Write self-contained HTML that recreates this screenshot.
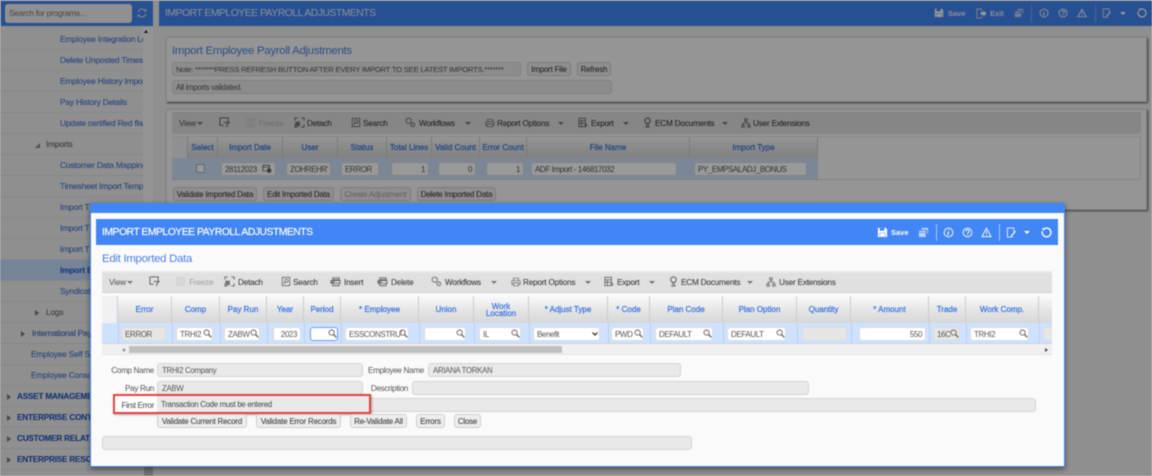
<!DOCTYPE html>
<html><head><meta charset="utf-8"><style>
html,body{margin:0;padding:0;width:1152px;height:476px;overflow:hidden;background:#eee}
body{position:relative;font-family:"Liberation Sans",sans-serif;font-size:8.2px;color:#444}
#root{position:absolute;left:0;top:0;width:1152px;height:476px;filter:blur(.45px)}
div,span.a{position:absolute;box-sizing:border-box;white-space:nowrap}
svg{position:absolute;overflow:visible}
.s{left:0;width:143px;height:21px;border-bottom:1px solid #e0e0e0;color:#4474d4;line-height:21.500px;font-size:8.4px;letter-spacing:-.2px;overflow:hidden;-webkit-text-stroke:.1px}
.b{font-weight:bold;color:#2456c0;font-size:8.2px;letter-spacing:-.2px}
.p{background:#f8f8f8;border:1px solid #ddd;box-shadow:1px 1px 2px #555}
.f{background:#e9e9e9;border:1px solid #d5d5d5;border-radius:3px;font-size:7.8px;letter-spacing:-.28px;color:#555;padding-left:4px;overflow:hidden}
.w{background:#fff;border:1px solid #dcdcdc;border-radius:3px;height:14px;top:327px;line-height:14px;font-size:8px;letter-spacing:-.4px;color:#555;padding-left:3px;overflow:hidden}
.g{background:#e6e6e6}
.r{text-align:right;padding-right:3px}
.btn{background:#ededed;border:1px solid #d0d0d0;border-radius:3px;text-align:center;font-size:7.9px;letter-spacing:-.17px;color:#444;height:14px;line-height:14px;-webkit-text-stroke:.1px}
.h{background:linear-gradient(#fafafa,#e4e4e4 55%,#d8d8d8);border-right:1px solid #ccc;text-align:center;color:#3d78e0;font-weight:normal;-webkit-text-stroke:.25px;font-size:8px;display:flex;align-items:center;justify-content:center;line-height:7.5px;white-space:normal;padding-top:1px}
.tb{font-size:8.2px;letter-spacing:-.2px;color:#444;line-height:11px;-webkit-text-stroke:.12px}
.l{font-size:8.2px;letter-spacing:-.35px;color:#555;text-align:right;line-height:12px}
.ar{width:0;height:0;border-left:3px solid transparent;border-right:3px solid transparent;border-top:3.5px solid #777}
.tt{font-size:10.4px;letter-spacing:-.5px;line-height:12px}
.st{color:#4a80e8;font-size:11.4px;letter-spacing:-.27px;line-height:14px}
</style></head><body>
<svg width="0" height="0" style="position:absolute"><defs>
<symbol id="q" viewBox="0 0 10 10"><circle cx="4" cy="4" r="2.9" fill="none" stroke="#666" stroke-width="1"/><path d="M6.2 6.2L9.3 9.3" stroke="#666" stroke-width="1.5"/></symbol>
<symbol id="flt" viewBox="0 0 12 12"><path d="M1 1h9v6M1 1v8h4M5 6h6L8.5 8.5V11" fill="none" stroke="#666" stroke-width="1.1"/></symbol>
<symbol id="frz" viewBox="0 0 12 12"><rect x="1" y="1" width="9" height="9" fill="#ddd" stroke="#ccc"/><path d="M4 1v9M7 1v9" stroke="#ccc"/></symbol>
<symbol id="det" viewBox="0 0 12 12"><path d="M1 4V1h3M8 1h3v3M11 8v3H8M4 11H1V8" fill="none" stroke="#666"/><rect x="1.5" y="5" width="5" height="5" fill="#777"/></symbol>
<symbol id="sea" viewBox="0 0 12 12"><rect x="1.5" y="1" width="9" height="10" fill="none" stroke="#666"/><circle cx="6.5" cy="5" r="2" fill="none" stroke="#666"/><path d="M5 6.5L3 9" stroke="#666"/></symbol>
<symbol id="ins" viewBox="0 0 12 12"><path d="M3 2h7v2H3zM1 5h10v3H1zM3 8h7v2.500H3z" fill="none" stroke="#666"/><path d="M1 6.500h4" stroke="#666" stroke-width="1.500"/></symbol>
<symbol id="wf" viewBox="0 0 12 12"><circle cx="4" cy="4" r="2.800" fill="none" stroke="#888" stroke-width="1.400"/><circle cx="8.500" cy="8.500" r="2" fill="none" stroke="#777" stroke-width="1.200"/></symbol>
<symbol id="pr" viewBox="0 0 12 12"><path d="M3 4V1.500h6V4M3 9H1V4.500h10V9H9M3 7h6v3.500H3z" fill="none" stroke="#777"/></symbol>
<symbol id="ex" viewBox="0 0 12 12"><path d="M1 1h8v10H1zM1 4h8M1 7h8M4 4v7" fill="none" stroke="#666"/><path d="M8 8h3v3H8z" fill="#777"/></symbol>
<symbol id="ecm" viewBox="0 0 12 12"><circle cx="6" cy="4" r="3" fill="none" stroke="#666" stroke-width="1.200"/><path d="M5 7h2v4H5zM3.500 11h5" fill="none" stroke="#666"/></symbol>
<symbol id="ue" viewBox="0 0 12 12"><path d="M4.500 1h3v2.500h-3zM1 8.500h3V11H1zM8 8.500h3V11H8zM6 3.500V6M2.500 8.500V6h7v2.500" fill="none" stroke="#666"/></symbol>
<symbol id="sv" viewBox="0 0 12 12"><path d="M1 1h8.500L11 2.500V11H1z" fill="#fff"/><path d="M3 1h5v3H3z" fill="#4285f4"/><path d="M3 6.500h6V11H3z" fill="#fff" stroke="#4285f4" stroke-width=".5"/></symbol>
<symbol id="ex2" viewBox="0 0 12 12"><path d="M6 3V1H1v10h5V9" fill="none" stroke="#ddd"/><path d="M5 4.500h3V2.500l3.500 3.500L8 9.500V7.500H5z" fill="#fff"/></symbol>
<symbol id="cp" viewBox="0 0 12 12"><path d="M4 1h7v6h-1V3H4z" fill="#bcd2f8"/><path d="M1 4h7.500v7H1z" fill="#bcd2f8"/><path d="M1 6h7.500" stroke="#4285f4" stroke-width=".7"/></symbol>
<symbol id="inf" viewBox="0 0 12 12"><circle cx="6" cy="6" r="4.800" fill="none" stroke="#fff" stroke-width="1"/><path d="M6.500 2.800v.9M6 5l-.6 4" stroke="#fff" stroke-width="1.300"/></symbol>
<symbol id="hlp" viewBox="0 0 12 12"><circle cx="6" cy="6" r="4.800" fill="none" stroke="#fff" stroke-width="1"/><path d="M4.300 4.700a1.800 1.700 0 1 1 2.600 1.500C6.200 6.600 6 7 6 7.500M6 8.300v1" fill="none" stroke="#fff"/></symbol>
<symbol id="wrn" viewBox="0 0 12 12"><path d="M6 1.500L11 10.500H1z" fill="none" stroke="#fff"/><path d="M6 4.500v3.500M6 8.600v1" stroke="#fff" stroke-width=".8"/></symbol>
<symbol id="nt" viewBox="0 0 12 12"><path d="M8.500 5V1H1.500v10h6" fill="none" stroke="#eee"/><path d="M5 9.500L10 4l.8 1L6 10.500z" fill="#fff"/></symbol>
<symbol id="rf" viewBox="0 0 12 12"><path d="M3.500 1.900A4.800 4.800 0 1 1 1.500 4.500" fill="none" stroke="#fff" stroke-width="1.500"/><path d="M1 1l3.500.6-1.800 2.700z" fill="#fff"/></symbol>
</defs></svg>
<div id="root">
<!-- sidebar -->
<div style="left:0;top:0;width:153px;height:476px;background:#eee"></div>
<div style="left:143px;top:27px;width:10px;height:449px;background:#f7f7f7"></div>
<div style="left:144px;top:30px;width:0;height:0;border-left:2.500px solid transparent;border-right:2.500px solid transparent;border-bottom:3px solid #222"></div>
<div style="left:144px;top:466px;width:9px;height:10px;background:#bbb"></div>
<div class="s" style="top:29px;padding-left:60px">Employee Integration Lo</div>
<div class="s" style="top:50px;padding-left:60px">Delete Unposted Timesl</div>
<div class="s" style="top:71px;padding-left:60px">Employee History Impor</div>
<div class="s" style="top:92px;padding-left:60px">Pay History Details</div>
<div class="s" style="top:113px;padding-left:60px">Update certified Red flag</div>
<div class="s" style="top:134px;padding-left:46px;color:#6a6a6a">Imports</div>
<div class="s" style="top:155px;padding-left:60px">Customer Data Mapping</div>
<div class="s" style="top:176px;padding-left:60px">Timesheet Import Templ</div>
<div class="s" style="top:197px;padding-left:60px">Import T</div>
<div class="s" style="top:218px;padding-left:60px">Import T</div>
<div class="s" style="top:239px;padding-left:60px">Import T</div>
<div class="s" style="top:260px;padding-left:60px;background:#c4dcff;font-weight:bold;color:#2e62c8">Import E</div>
<div class="s" style="top:281px;padding-left:60px">Syndicat</div>
<div class="s" style="top:302px;padding-left:46px;color:#6a6a6a">Logs</div>
<div class="s" style="top:323px;padding-left:32px;color:#3e63c0">International Pay</div>
<div class="s" style="top:344px;padding-left:31px">Employee Self S</div>
<div class="s" style="top:365px;padding-left:31px">Employee Conso</div>
<div class="s b" style="top:386px;padding-left:17px">ASSET MANAGEME</div>
<div class="s b" style="top:407px;padding-left:17px">ENTERPRISE CONT</div>
<div class="s b" style="top:428px;padding-left:17px">CUSTOMER RELAT</div>
<div class="s b" style="top:449px;padding-left:17px">ENTERPRISE RESO</div>
<div style="left:35px;top:143px;width:0;height:0;border-bottom:5px solid #888;border-left:5px solid transparent"></div>
<div style="left:35px;top:310px;border-left:4px solid #777;border-top:3.500px solid transparent;border-bottom:3.500px solid transparent"></div>
<div style="left:21px;top:331px;border-left:4px solid #777;border-top:3.500px solid transparent;border-bottom:3.500px solid transparent"></div>
<div style="left:7px;top:394px;border-left:4px solid #777;border-top:3.500px solid transparent;border-bottom:3.500px solid transparent"></div>
<div style="left:7px;top:415px;border-left:4px solid #777;border-top:3.500px solid transparent;border-bottom:3.500px solid transparent"></div>
<div style="left:7px;top:436px;border-left:4px solid #777;border-top:3.500px solid transparent;border-bottom:3.500px solid transparent"></div>
<div style="left:7px;top:457px;border-left:4px solid #777;border-top:3.500px solid transparent;border-bottom:3.500px solid transparent"></div>
<!-- top bars -->
<div style="left:0;top:0;width:1152px;height:1px;background:#f4f4f4"></div>
<div style="left:1px;top:1px;width:152px;height:25px;background:#4285f4"></div>
<div style="left:5px;top:4px;width:127px;height:19px;background:#f0f0f0;border-radius:3px;color:#777;font-size:8.400px;letter-spacing:-.3px;line-height:19px;padding-left:4px">Search for programs...</div>
<svg style="left:137px;top:8px" width="10" height="10" viewBox="0 0 12 12"><path d="M1.500 5A4.500 4.500 0 0 1 10 4M10.500 7A4.500 4.500 0 0 1 2 8" fill="none" stroke="#ddd" stroke-width="1.300"/><path d="M8 4h3.500V.8zM4 8H.5v3.200z" fill="#ddd"/></svg>
<div style="left:159px;top:1px;width:993px;height:25px;background:#4285f4"></div>
<div class="tt" style="left:165px;top:8px;color:#e8eefb">IMPORT EMPLOYEE PAYROLL ADJUSTMENTS</div>
<svg style="left:934px;top:8px" width="10" height="10"><use href="#sv"/></svg>
<div style="left:948px;top:9px;color:#eef;font-size:7.500px;font-weight:bold;line-height:10px">Save</div>
<svg style="left:976px;top:8px" width="11" height="11"><use href="#ex2"/></svg>
<div style="left:990px;top:9px;color:#eef;font-size:7.500px;font-weight:bold;line-height:10px">Exit</div>
<svg style="left:1014px;top:8px" width="10" height="10"><use href="#cp"/></svg>
<div style="left:1031px;top:5px;width:1px;height:17px;background:#7ea8f0"></div>
<svg style="left:1039px;top:8px" width="10" height="10"><use href="#inf"/></svg>
<svg style="left:1058px;top:8px" width="10" height="10"><use href="#hlp"/></svg>
<svg style="left:1077px;top:8px" width="10" height="10"><use href="#wrn"/></svg>
<div style="left:1095px;top:5px;width:1px;height:17px;background:#7ea8f0"></div>
<svg style="left:1102px;top:8px" width="10" height="10"><use href="#nt"/></svg>
<div class="ar" style="left:1120px;top:12px;border-top-color:#fff"></div>
<svg style="left:1137px;top:8px" width="10" height="10"><use href="#rf"/></svg>
<!-- panel 1 -->
<div class="p" style="left:166px;top:37px;width:981px;height:65px"></div>
<div class="st" style="left:172px;top:44px">Import Employee Payroll Adjustments</div>
<div class="f" style="left:172px;top:62px;width:349px;height:14px;line-height:14px;padding-left:3px;font-size:7.700px;letter-spacing:-.24px">Note: *******PRESS REFRESH BUTTON AFTER EVERY IMPORT TO SEE LATEST IMPORTS.*******</div>
<div class="btn" style="left:527px;top:62px;width:44px">Import File</div>
<div class="btn" style="left:577px;top:62px;width:34px">Refresh</div>
<div class="f" style="left:172px;top:80px;width:440px;height:14px;line-height:14px;padding-left:3px">All imports validated.</div>
<!-- panel 2 -->
<div class="p" style="left:166px;top:109px;width:981px;height:101px"></div>
<div style="left:172px;top:112px;width:969px;height:22px;background:#e0e0e0;border-top:1px solid #cdd5e2"></div>
<div style="left:172px;top:136px;width:969px;height:44px;border:1px solid #e2e2e2"></div>
<div class="tb" style="left:179px;top:118px;color:#666">View</div><div class="ar" style="left:197px;top:122px"></div>
<svg style="left:219px;top:117px" width="11" height="11"><use href="#flt"/></svg>
<svg style="left:246px;top:118px" width="10" height="10"><use href="#frz"/></svg>
<div class="tb" style="left:259px;top:118px;color:#bbb">Freeze</div>
<svg style="left:294px;top:117px" width="11" height="11"><use href="#det"/></svg>
<div class="tb" style="left:307px;top:118px">Detach</div>
<svg style="left:351px;top:117px" width="10" height="11"><use href="#sea"/></svg>
<div class="tb" style="left:363px;top:118px">Search</div>
<svg style="left:405px;top:117px" width="11" height="11"><use href="#wf"/></svg>
<div class="tb" style="left:419px;top:118px">Workflows</div><div class="ar" style="left:465px;top:122px"></div>
<svg style="left:485px;top:118px" width="10" height="10"><use href="#pr"/></svg>
<div class="tb" style="left:497px;top:118px">Report Options</div><div class="ar" style="left:558px;top:122px"></div>
<svg style="left:578px;top:117px" width="10" height="11"><use href="#ex"/></svg>
<div class="tb" style="left:591px;top:118px">Export</div><div class="ar" style="left:623px;top:122px"></div>
<svg style="left:642px;top:117px" width="11" height="11"><use href="#ecm"/></svg>
<div class="tb" style="left:655px;top:118px">ECM Documents</div><div class="ar" style="left:722px;top:122px"></div>
<svg style="left:741px;top:118px" width="10" height="10"><use href="#ue"/></svg>
<div class="tb" style="left:753px;top:118px">User Extensions</div>
<!-- table 1 -->
<div class="h" style="left:172px;top:137px;width:16px;height:21px;background:#f0f1f5"></div>
<div class="h" style="left:188px;top:137px;width:30px;height:21px">Select</div>
<div class="h" style="left:218px;top:137px;width:65px;height:21px">Import Date</div>
<div class="h" style="left:283px;top:137px;width:55px;height:21px">User</div>
<div class="h" style="left:338px;top:137px;width:49px;height:21px">Status</div>
<div class="h" style="left:387px;top:137px;width:45px;height:21px">Total Lines</div>
<div class="h" style="left:432px;top:137px;width:48px;height:21px">Valid Count</div>
<div class="h" style="left:480px;top:137px;width:47px;height:21px">Error Count</div>
<div class="h" style="left:527px;top:137px;width:163px;height:21px">File Name</div>
<div class="h" style="left:690px;top:137px;width:128px;height:21px">Import Type</div>
<div style="left:172px;top:158px;width:646px;height:22px;background:#cfe1fb;border-bottom:1px solid #c5d3e6"></div>
<div class="w" style="left:196px;top:164px;width:9px;height:9px;border:1px solid #aaa;border-radius:2px;padding:0"></div>
<div class="w" style="left:221px;top:162px;width:55px;height:14px">28112023</div>
<svg style="left:262px;top:163px" width="10" height="11" viewBox="0 0 12 12"><path d="M1 2h8v4M1 2v7h4M1 4.500h8" fill="none" stroke="#666"/><circle cx="8.500" cy="8.500" r="2.800" fill="#666"/></svg>
<div class="w" style="left:286px;top:162px;width:45px;height:14px">ZOHREHR'</div>
<div class="w" style="left:341px;top:162px;width:38px;height:14px">ERROR</div>
<div class="w r" style="left:391px;top:162px;width:38px;height:14px">1</div>
<div class="w r" style="left:438px;top:162px;width:38px;height:14px">0</div>
<div class="w r" style="left:486px;top:162px;width:38px;height:14px">1</div>
<div class="w" style="left:531px;top:162px;width:146px;height:14px">ADF Import - 146817032</div>
<div class="w" style="left:694px;top:162px;width:113px;height:14px">PY_EMPSALADJ_BONUS</div>
<div class="btn" style="left:173px;top:187px;width:84px">Validate Imported Data</div>
<div class="btn" style="left:263px;top:187px;width:71px">Edit Imported Data</div>
<div class="btn" style="left:340px;top:187px;width:71px;color:#aaa">Create Adjustment</div>
<div class="btn" style="left:417px;top:187px;width:79px">Delete Imported Data</div>
<!-- dim -->
<div style="left:0;top:0;width:1152px;height:476px;background:rgba(0,0,0,.4)"></div>
<!-- dialog -->
<div style="left:90px;top:203px;width:975px;height:264px;background:#fafafa;border:1px solid #4285f4;box-shadow:0 2px 5px rgba(0,0,0,.5)"></div>
<div style="left:90px;top:203px;width:975px;height:10px;background:#4285f4"></div>
<div style="left:96px;top:219px;width:962px;height:26px;background:#4285f4"></div>
<div class="tt" style="left:102px;top:227px;color:#fff;-webkit-text-stroke:.15px">IMPORT EMPLOYEE PAYROLL ADJUSTMENTS</div>
<svg style="left:877px;top:227px" width="11" height="11"><use href="#sv"/></svg>
<div style="left:891px;top:228px;color:#fff;font-size:7.500px;font-weight:bold;line-height:10px">Save</div>
<svg style="left:918px;top:227px" width="11" height="11"><use href="#cp"/></svg>
<div style="left:936px;top:224px;width:1px;height:17px;background:#a8c6fa"></div>
<svg style="left:943px;top:227px" width="11" height="11"><use href="#inf"/></svg>
<svg style="left:962px;top:227px" width="11" height="11"><use href="#hlp"/></svg>
<svg style="left:981px;top:227px" width="11" height="11"><use href="#wrn"/></svg>
<div style="left:999px;top:224px;width:1px;height:17px;background:#a8c6fa"></div>
<svg style="left:1006px;top:227px" width="11" height="11"><use href="#nt"/></svg>
<div class="ar" style="left:1024px;top:231px;border-top-color:#fff"></div>
<svg style="left:1041px;top:227px" width="11" height="11"><use href="#rf"/></svg>
<div class="st" style="left:102px;top:252px">Edit Imported Data</div>
<!-- toolbar -->
<div style="left:102px;top:271px;width:950px;height:22px;background:#e0e0e0;border-top:2px solid #e8e8e8;border-bottom:1px solid #d2d2d2"></div>
<div class="tb" style="left:109px;top:277px;color:#666">View</div><div class="ar" style="left:127px;top:281px"></div>
<svg style="left:149px;top:276px" width="11" height="11"><use href="#flt"/></svg>
<svg style="left:176px;top:277px" width="10" height="10"><use href="#frz"/></svg>
<div class="tb" style="left:189px;top:277px;color:#aaa">Freeze</div>
<svg style="left:224px;top:276px" width="11" height="11"><use href="#det"/></svg>
<div class="tb" style="left:238px;top:277px">Detach</div>
<svg style="left:281px;top:276px" width="10" height="11"><use href="#sea"/></svg>
<div class="tb" style="left:293px;top:277px">Search</div>
<svg style="left:330px;top:276px" width="11" height="11"><use href="#ins"/></svg>
<div class="tb" style="left:344px;top:277px">Insert</div>
<svg style="left:377px;top:276px" width="11" height="11"><use href="#ins"/></svg>
<div class="tb" style="left:391px;top:277px">Delete</div>
<svg style="left:431px;top:276px" width="11" height="11"><use href="#wf"/></svg>
<div class="tb" style="left:445px;top:277px">Workflows</div><div class="ar" style="left:491px;top:281px"></div>
<svg style="left:511px;top:277px" width="10" height="10"><use href="#pr"/></svg>
<div class="tb" style="left:523px;top:277px">Report Options</div><div class="ar" style="left:585px;top:281px"></div>
<svg style="left:604px;top:276px" width="10" height="11"><use href="#ex"/></svg>
<div class="tb" style="left:617px;top:277px">Export</div><div class="ar" style="left:649px;top:281px"></div>
<svg style="left:668px;top:276px" width="11" height="11"><use href="#ecm"/></svg>
<div class="tb" style="left:681px;top:277px">ECM Documents</div><div class="ar" style="left:747px;top:281px"></div>
<svg style="left:766px;top:277px" width="10" height="10"><use href="#ue"/></svg>
<div class="tb" style="left:779px;top:277px">User Extensions</div>
<!-- table header -->
<div class="h" style="left:102px;top:296px;width:16px;height:27px;background:#eff1f5"></div>
<div class="h" style="left:118px;top:296px;width:54px;height:27px">Error</div>
<div class="h" style="left:172px;top:296px;width:48px;height:27px">Comp</div>
<div class="h" style="left:220px;top:296px;width:47px;height:27px">Pay Run</div>
<div class="h" style="left:267px;top:296px;width:37px;height:27px">Year</div>
<div class="h" style="left:304px;top:296px;width:37px;height:27px">Period</div>
<div class="h" style="left:341px;top:296px;width:78px;height:27px">* Employee</div>
<div class="h" style="left:419px;top:296px;width:55px;height:27px">Union</div>
<div class="h" style="left:474px;top:296px;width:55px;height:27px">Work<br>Location</div>
<div class="h" style="left:529px;top:296px;width:79px;height:27px">* Adjust Type</div>
<div class="h" style="left:608px;top:296px;width:42px;height:27px">* Code</div>
<div class="h" style="left:650px;top:296px;width:73px;height:27px">Plan Code</div>
<div class="h" style="left:723px;top:296px;width:74px;height:27px">Plan Option</div>
<div class="h" style="left:797px;top:296px;width:54px;height:27px">Quantity</div>
<div class="h" style="left:851px;top:296px;width:78px;height:27px">* Amount</div>
<div class="h" style="left:929px;top:296px;width:37px;height:27px">Trade</div>
<div class="h" style="left:966px;top:296px;width:73px;height:27px">Work Comp.</div>
<div class="h" style="left:1039px;top:296px;width:13px;height:27px;border-right:0"></div>
<!-- row -->
<div style="left:102px;top:323px;width:950px;height:21px;background:#cfe2fd;border-bottom:1px solid #c8d4e4"></div>
<div style="left:118px;top:323px;width:1px;height:21px;background:#bcd0ea"></div>
<div style="left:172px;top:323px;width:1px;height:21px;background:#bcd0ea"></div>
<div style="left:220px;top:323px;width:1px;height:21px;background:#bcd0ea"></div>
<div style="left:267px;top:323px;width:1px;height:21px;background:#bcd0ea"></div>
<div style="left:304px;top:323px;width:1px;height:21px;background:#bcd0ea"></div>
<div style="left:341px;top:323px;width:1px;height:21px;background:#bcd0ea"></div>
<div style="left:419px;top:323px;width:1px;height:21px;background:#bcd0ea"></div>
<div style="left:474px;top:323px;width:1px;height:21px;background:#bcd0ea"></div>
<div style="left:529px;top:323px;width:1px;height:21px;background:#bcd0ea"></div>
<div style="left:608px;top:323px;width:1px;height:21px;background:#bcd0ea"></div>
<div style="left:650px;top:323px;width:1px;height:21px;background:#bcd0ea"></div>
<div style="left:723px;top:323px;width:1px;height:21px;background:#bcd0ea"></div>
<div style="left:797px;top:323px;width:1px;height:21px;background:#bcd0ea"></div>
<div style="left:851px;top:323px;width:1px;height:21px;background:#bcd0ea"></div>
<div style="left:929px;top:323px;width:1px;height:21px;background:#bcd0ea"></div>
<div style="left:966px;top:323px;width:1px;height:21px;background:#bcd0ea"></div>
<div style="left:1039px;top:323px;width:1px;height:21px;background:#bcd0ea"></div>
<div class="w g" style="left:121px;width:45px">ERROR</div>
<div class="w" style="left:176px;width:37px">TRHI2</div>
<div class="w" style="left:224px;width:36px">ZABW</div>
<div class="w r" style="left:273px;width:28px">2023</div>
<div class="w" style="left:310px;width:28px;border:1px solid #6f9ff0"></div>
<div class="w" style="left:345px;width:64px">ESSCONSTRU'</div>
<div class="w" style="left:424px;width:42px"></div>
<div class="w" style="left:479px;width:42px">IL</div>
<div class="w" style="left:533px;width:67px">Benefit</div>
<svg style="left:592px;top:332px" width="6" height="4" viewBox="0 0 6 4"><path d="M.5.5L3 3 5.500.5" fill="none" stroke="#222" stroke-width="1.200"/></svg>
<div class="w" style="left:611px;width:33px">PWD</div>
<div class="w" style="left:655px;width:58px">DEFAULT</div>
<div class="w" style="left:727px;width:59px">DEFAULT</div>
<div class="w g" style="left:802px;width:45px"></div>
<div class="w r" style="left:859px;width:67px">550</div>
<div class="w g" style="left:933px;width:27px">16C</div>
<div class="w" style="left:970px;width:59px">TRHI2</div>
<div class="w g" style="left:1043px;width:9px;border-right:0"></div>
<svg style="left:203px;top:329px" width="9" height="9"><use href="#q"/></svg>
<svg style="left:250px;top:329px" width="9" height="9"><use href="#q"/></svg>
<svg style="left:328px;top:329px" width="9" height="9"><use href="#q"/></svg>
<svg style="left:399px;top:329px" width="9" height="9"><use href="#q"/></svg>
<svg style="left:456px;top:329px" width="9" height="9"><use href="#q"/></svg>
<svg style="left:511px;top:329px" width="9" height="9"><use href="#q"/></svg>
<svg style="left:634px;top:329px" width="9" height="9"><use href="#q"/></svg>
<svg style="left:703px;top:329px" width="9" height="9"><use href="#q"/></svg>
<svg style="left:776px;top:329px" width="9" height="9"><use href="#q"/></svg>
<svg style="left:950px;top:329px" width="9" height="9"><use href="#q"/></svg>
<svg style="left:1019px;top:329px" width="9" height="9"><use href="#q"/></svg>
<!-- scrollbar -->
<div style="left:102px;top:344px;width:950px;height:11px;background:#f0f0f0;border-bottom:1px solid #e4e4e4"></div>
<div style="left:129px;top:346px;width:433px;height:7px;background:#c0c0c0"></div>
<div style="left:122px;top:348px;border-right:3px solid #888;border-top:2.500px solid transparent;border-bottom:2.500px solid transparent"></div>
<div style="left:1045px;top:348px;border-left:3px solid #444;border-top:2.500px solid transparent;border-bottom:2.500px solid transparent"></div>
<!-- form -->
<div class="l" style="left:100px;top:365px;width:54px">Comp Name</div>
<div class="f" style="left:157px;top:363px;width:206px;height:14px;line-height:14px">TRHI2 Company</div>
<div class="l" style="left:360px;top:365px;width:64px">Employee Name</div>
<div class="f" style="left:428px;top:363px;width:253px;height:14px;line-height:14px">ARIANA TORKAN</div>
<div class="l" style="left:100px;top:383px;width:54px">Pay Run</div>
<div class="f" style="left:157px;top:381px;width:206px;height:14px;line-height:14px">ZABW</div>
<div class="l" style="left:350px;top:383px;width:58px">Description</div>
<div class="f" style="left:412px;top:381px;width:397px;height:14px"></div>
<div class="f" style="left:157px;top:398px;width:879px;height:14px"></div>
<div style="left:113px;top:394px;width:258px;height:20px;border:2px solid #e8413f;box-shadow:1px 1px 2px rgba(0,0,0,.3);background:#fff"></div>
<div class="f" style="left:157px;top:396px;width:212px;height:16px;line-height:18px;border:0;border-radius:0;color:#444">Transaction Code must be entered</div>
<div class="l" style="left:110px;top:400px;width:44px;color:#444">First Error</div>
<div class="btn" style="left:157px;top:414px;width:90px">Validate Current Record</div>
<div class="btn" style="left:256px;top:414px;width:85px">Validate Error Records</div>
<div class="btn" style="left:350px;top:414px;width:57px">Re-Validate All</div>
<div class="btn" style="left:416px;top:414px;width:29px">Errors</div>
<div class="btn" style="left:454px;top:414px;width:27px">Close</div>
<div class="f" style="left:102px;top:436px;width:590px;height:14px"></div>
</div>
</body></html>
